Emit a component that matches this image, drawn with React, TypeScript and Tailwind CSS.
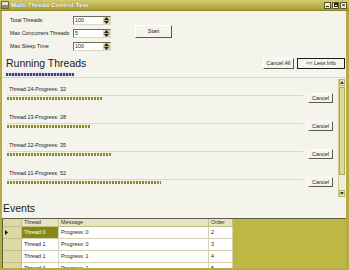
import React from "react";

const small = "text-[5.4px] leading-[7px] text-[#1c1c1c]";

type Row = { thread: string; message: string; order: number; selected?: boolean };

const threads = [
  { id: 24, progress: 32 },
  { id: 23, progress: 28 },
  { id: 22, progress: 35 },
  { id: 21, progress: 52 },
];

const events: Row[] = [
  { thread: "Thread 0", message: "Progress: 0", order: 2, selected: true },
  { thread: "Thread 1", message: "Progress: 0", order: 3 },
  { thread: "Thread 1", message: "Progress: 1", order: 4 },
  { thread: "Thread 0", message: "Progress: 1", order: 5 },
];

function Arrow({ down }: { down?: boolean }) {
  return (
    <svg width="5" height="3" viewBox="0 0 5 3" className="block">
      <path d={down ? "M0 0H5L2.5 3Z" : "M0 3H5L2.5 0Z"} fill="#222" />
    </svg>
  );
}

function Btn({ label, className }: { label: string; className: string }) {
  return (
    <button
      className={`flex items-center justify-center bg-[#f4f3ec] border border-t-white border-l-white border-r-[#5a5a4a] border-b-[#5a5a4a] ${small} ${className}`}
    >
      {label}
    </button>
  );
}

function SpinBox({ value }: { value: string }) {
  return (
    <div className="flex h-[9px] w-[38px] bg-white border border-t-[#6e6e58] border-l-[#6e6e58] border-r-[#d8d6c4] border-b-[#d8d6c4]">
      <span className={`flex-1 pl-[1px] ${small} leading-[7px]`}>{value}</span>
      <div className="flex flex-col w-[7px] bg-[#dedaa8]">
        <div className="flex-1 flex items-center justify-center border-b border-[#b8b47a]">
          <Arrow />
        </div>
        <div className="flex-1 flex items-center justify-center">
          <Arrow down />
        </div>
      </div>
    </div>
  );
}

function TitleBar() {
  return (
    <div className="h-[11px] flex items-center bg-gradient-to-b from-[#d3cc72] to-[#a99f33] border-b border-[#8e8628]">
      <div className="ml-[1px] w-[8px] h-[8px] bg-[#e9e6cf] border border-[#6d6a30] flex items-end">
        <div className="w-full h-[3px] bg-[#8a8a8a]" />
      </div>
      <span className="ml-[2px] text-[6px] leading-[8px] font-bold text-white tracking-[0.2px] [text-shadow:0_0_1px_#6b6420]">
        Multi Thread Control Test
      </span>
      <div className="ml-auto mr-[2px] flex gap-[1px]">
        <div className="w-[7px] h-[7px] bg-[#efedd9] border border-[#5b5826] flex items-end justify-center pb-[1px]">
          <div className="w-[3px] h-[1px] bg-[#222]" />
        </div>
        <div className="w-[7px] h-[7px] bg-[#efedd9] border border-[#5b5826] flex items-center justify-center">
          <div className="w-[4px] h-[4px] border border-t-2 border-[#222]" />
        </div>
        <div className="w-[7px] h-[7px] bg-[#efedd9] border border-[#5b5826] flex items-center justify-center text-[6px] leading-[6px] font-bold text-[#222]">
          ×
        </div>
      </div>
    </div>
  );
}

function ThreadItem({ id, progress }: { id: number; progress: number }) {
  return (
    <div className="h-[28px] flex pl-[5px]">
      <div className="w-[296px] flex flex-col">
        <span className={`${small} pl-[2px] pt-[8px]`}>
          Thread {id}-Progress: {progress}
        </span>
        <div className="mt-[2px] h-[5px] border-t border-[#dcdab0]">
          <div
            className="mt-[1px] h-[3px] bg-[repeating-linear-gradient(90deg,#8c8a1c_0px,#8c8a1c_2px,transparent_2px,transparent_3px)]"
            style={{ width: `${progress}%` }}
          />
        </div>
      </div>
      <Btn label="Cancel" className="ml-[5px] mt-[15px] w-[25px] h-[10px]" />
    </div>
  );
}

function ScrollBar() {
  return (
    <div className="w-[7px] my-[1px] mr-[1px] flex flex-col bg-[#eeedd9] border-l border-[#cfcb8a]">
      <div className="h-[7px] flex items-center justify-center bg-[#e6e3bf] border border-[#b5b170]">
        <Arrow />
      </div>
      <div className="mt-[1px] h-[88px] bg-[#dcd99e] border border-[#aaa65c]" />
      <div className="flex-1" />
      <div className="h-[7px] flex items-center justify-center bg-[#e6e3bf] border border-[#b5b170]">
        <Arrow down />
      </div>
    </div>
  );
}

function EventGrid() {
  return (
    <div className="h-[50px] bg-[#bdb843] border-t border-l border-[#5e5d48] overflow-hidden flex flex-col">
      <div className="flex h-[8px] shrink-0">
        <div className="w-[19px] bg-[#dcd9a6] border-r border-b border-[#c2be84]" />
        <div className={`w-[37px] bg-[#e6e4c6] border-r border-b border-[#c2be84] pl-[2px] ${small} leading-[7px] text-[#333]`}>Thread</div>
        <div className={`w-[150px] bg-[#e6e4c6] border-r border-b border-[#c2be84] pl-[2px] ${small} leading-[7px] text-[#333]`}>Message</div>
        <div className={`w-[24px] bg-[#e6e4c6] border-r border-b border-[#c2be84] pl-[2px] ${small} leading-[7px] text-[#333]`}>Order</div>
      </div>
      {events.map((e, i) => (
        <div key={i} className="flex h-[12px] shrink-0">
          <div className="w-[19px] bg-[#dcd9a6] border-r border-b border-[#c2be84] flex items-center pl-[2px]">
            {e.selected ? (
              <svg width="3" height="5" viewBox="0 0 3 5">
                <path d="M0 0L3 2.5L0 5Z" fill="#111" />
              </svg>
            ) : null}
          </div>
          <div
            className={`w-[37px] border-r border-b border-[#d4d2b4] flex items-center pl-[2px] ${small} ${
              e.selected ? "bg-[#8a8719] !text-white" : "bg-white"
            }`}
          >
            {e.thread}
          </div>
          <div className={`w-[150px] bg-white border-r border-b border-[#d4d2b4] flex items-center pl-[2px] ${small}`}>
            {e.message}
          </div>
          <div className={`w-[24px] bg-white border-r border-b border-[#d4d2b4] flex items-center pl-[2px] ${small}`}>
            {e.order}
          </div>
        </div>
      ))}
    </div>
  );
}

export default function App() {
  return (
    <div className="w-[349px] h-[270px] bg-[#b5ad44] flex flex-col overflow-hidden font-['Liberation_Sans',Arial,sans-serif]">
      <TitleBar />
      <div className="flex-1 ml-[2px] mr-[3px] mb-[2px] bg-[#f4f3ec] flex flex-col min-h-0">
        {/* settings */}
        <div className="flex mt-[5px] h-[35px]">
          <div className="flex flex-col gap-[4px]">
            {[
              ["Total Threads", "100"],
              ["Max Concurrent Threads", "5"],
              ["Max Sleep Time", "100"],
            ].map(([label, value]) => (
              <div key={label} className="flex items-center h-[9px]">
                <span className={`w-[71px] pl-[8px] ${small}`}>{label}</span>
                <SpinBox value={value} />
              </div>
            ))}
          </div>
          <Btn label="Start" className="ml-[24px] mt-[9px] w-[37px] h-[13px]" />
        </div>

        {/* running threads header */}
        <div className="flex items-center mt-[6px] h-[12px]">
          <span className="pl-[4px] text-[10.5px] leading-[12px] text-[#1a1a1a]">Running Threads</span>
          <Btn label="Cancel All" className="ml-auto w-[31px] h-[11px]" />
          <button
            className={`ml-[3px] mr-[1px] w-[48px] h-[11px] flex items-center justify-center bg-[#f4f3ec] border border-[#1c1c1c] ${small}`}
          >
            &lt;&lt; Less Info
          </button>
        </div>
        <div className="mt-[4px] ml-[4px] w-[68px] h-[3px] bg-[repeating-linear-gradient(90deg,#3c3c9a_0px,#3c3c9a_2px,#b9b9dc_2px,#b9b9dc_3px)]" />
        <div className="mt-[1px] h-[1px] bg-[#dad8b8]" />

        {/* thread list */}
        <div className="h-[120px] flex shrink-0">
          <div className="flex-1 overflow-hidden">
            {threads.map((t) => (
              <ThreadItem key={t.id} id={t.id} progress={t.progress} />
            ))}
          </div>
          <ScrollBar />
        </div>

        {/* events */}
        <div className="h-[20px] pt-[4px] pl-[1px] shrink-0">
          <span className="block text-[10.5px] leading-[12px] text-[#1a1a1a]">Events</span>
        </div>
        <EventGrid />
      </div>
    </div>
  );
}
